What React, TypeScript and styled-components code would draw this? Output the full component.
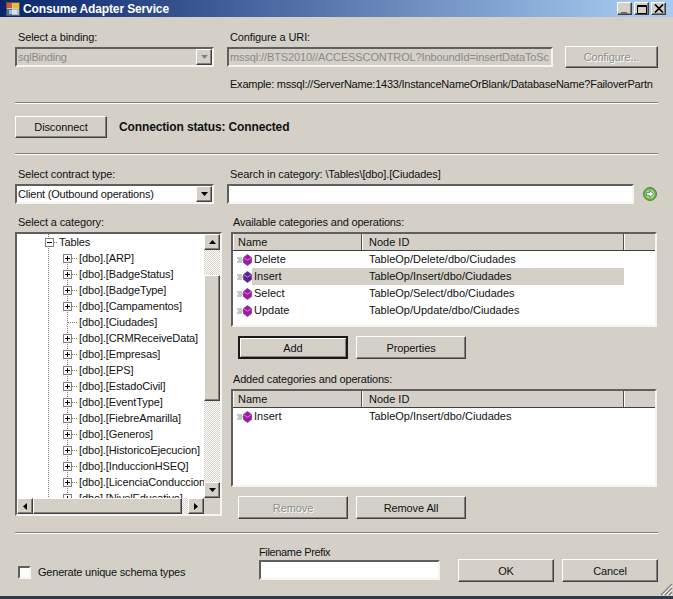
import React from "react";
import styled, { createGlobalStyle, css } from "styled-components";

const Global = createGlobalStyle`
  html, body { margin: 0; padding: 0; background: #d4d0c8; }
  * { box-sizing: border-box; }
`;

const dither = css`
  background-color: #d4d0c8;
  background-image: repeating-conic-gradient(#ffffff 0 25%, #d4d0c8 0 50%);
  background-size: 2px 2px;
`;
const raised = css`
  background: #d4d0c8;
  border-style: solid;
  border-width: 1px;
  border-color: #ffffff #404040 #404040 #ffffff;
  box-shadow: inset -1px -1px 0 #808080;
`;
const sunken = css`
  border-style: solid;
  border-width: 2px;
  border-color: #5f5f5f #f6f5f2 #f6f5f2 #5f5f5f;
`;

const Win = styled.div`
  position: relative;
  width: 673px;
  height: 599px;
  overflow: hidden;
  background: #d4d0c8;
  color: #111;
  font: 11px/14px "Liberation Sans", Arial, sans-serif;
  border-bottom: 3px solid #2c3a4e;
  display: flex;
  flex-direction: column;
`;
const TitleBar = styled.div`
  height: 17px;
  flex: none;
  background: linear-gradient(90deg, #0a246a 0%, #a6caf0 96%);
  display: flex;
  align-items: center;
  padding: 0 7px 0 6px;
  color: #fff;
  font-size: 12px;
  font-weight: bold;
  letter-spacing: -0.13px;
  gap: 3px;
`;
const TitleText = styled.span`
  flex: 1;
`;
const WinBtn = styled.div`
  ${raised}
  width: 15px;
  height: 13px;
  display: flex;
  align-items: center;
  justify-content: center;
`;
const WinBtnGroup = styled.div`
  display: flex;
  gap: 2px;
`;
const Content = styled.div`
  flex: 1;
  padding: 13px 15px 0;
  display: flex;
  flex-direction: column;
`;
const TwoCols = styled.div<{ $top?: number }>`
  display: grid;
  grid-template-columns: 212px 1fr;
  margin-top: ${(p) => p.$top ?? 0}px;
`;
const FieldLabel = styled.div`
  padding-left: 3px;
  height: 14px;
  margin-bottom: 3px;
  white-space: nowrap;
  letter-spacing: -0.12px;
`;
const ComboBox = styled.div<{ $disabled?: boolean }>`
  ${sunken}
  width: 199px;
  height: 20px;
  display: flex;
  align-items: center;
  background: ${(p) => (p.$disabled ? "#d4d0c8" : "#fff")};
  color: ${(p) => (p.$disabled ? "#8a8a8a" : "#111")};
  padding-left: 1px;
  letter-spacing: -0.2px;
`;
const ComboText = styled.span`
  flex: 1;
`;
const ComboArrow = styled.div`
  ${raised}
  width: 16px;
  height: 16px;
  display: flex;
  align-items: center;
  justify-content: center;
`;
const UriRow = styled.div`
  display: flex;
  align-items: center;
  margin-top: -1px;
  gap: 12px;
`;
const TextField = styled.div<{ $w: number; $disabled?: boolean }>`
  ${sunken}
  width: ${(p) => p.$w}px;
  height: 20px;
  background: ${(p) => (p.$disabled ? "#d4d0c8" : "#fff")};
  color: #8a8a8a;
  white-space: nowrap;
  overflow: hidden;
  padding: 1px 0 0 1px;
  letter-spacing: -0.11px;
`;
const Btn = styled.div<{ $w: number; $h?: number; $disabled?: boolean; $default?: boolean }>`
  ${raised}
  width: ${(p) => p.$w}px;
  height: ${(p) => p.$h ?? 22}px;
  flex: none;
  display: flex;
  align-items: center;
  justify-content: center;
  letter-spacing: -0.1px;
  color: ${(p) => (p.$disabled ? "#8d8d8d" : "#111")};
  ${(p) => p.$disabled && "text-shadow: 1px 1px 0 #fff;"}
  ${(p) =>
    p.$default &&
    "border: 2px solid #1a1a1a; box-shadow: inset 1px 1px 0 #fff, inset -1px -1px 0 #808080;"}
`;
const Example = styled.div`
  margin: 9px 0 0 215px;
  height: 14px;
  white-space: nowrap;
  overflow: hidden;
  letter-spacing: -0.23px;
`;
const Separator = styled.div<{ $top: number }>`
  height: 2px;
  flex: none;
  margin-top: ${(p) => p.$top}px;
  border-top: 1px solid #808080;
  border-bottom: 1px solid #fff;
`;
const ConnectRow = styled.div`
  display: flex;
  align-items: center;
  gap: 12px;
  margin-top: 12px;
`;
const Status = styled.div`
  font-size: 12px;
  font-weight: bold;
  letter-spacing: -0.13px;
`;
const SearchRow = styled.div`
  display: flex;
  align-items: center;
  gap: 9px;
`;
const Panels = styled.div`
  display: grid;
  grid-template-columns: 207px 1fr;
  column-gap: 5px;
  margin-top: 11px;
`;
const Tree = styled.div`
  ${sunken}
  height: 284px;
  background: #fff;
  display: grid;
  grid-template-columns: 1fr 16px;
  grid-template-rows: 1fr 16px;
`;
const TreeBody = styled.div`
  overflow: hidden;
  background-image:
    repeating-linear-gradient(180deg, #777 0 1px, transparent 1px 2px),
    repeating-linear-gradient(180deg, #777 0 1px, transparent 1px 2px);
  background-size: 1px 100%, 1px 100%;
  background-position: 31px 0, 50px 24px;
  background-repeat: no-repeat;
`;
const TreeRow = styled.div<{ $level: number }>`
  height: 16px;
  display: flex;
  align-items: center;
  padding-left: ${(p) => (p.$level === 0 ? 28 : 46)}px;
  white-space: nowrap;
  letter-spacing: -0.12px;
`;
const Expander = styled.svg`
  flex: none;
  background: #fff;
`;
const Dots = styled.span<{ $w: number; $ml?: number }>`
  flex: none;
  width: ${(p) => p.$w}px;
  margin-left: ${(p) => p.$ml ?? 0}px;
  height: 1px;
  background: repeating-linear-gradient(90deg, #777 0 1px, transparent 1px 2px);
`;
const TreeLabel = styled.span`
  margin-left: 2px;
`;
const VBar = styled.div`
  display: flex;
  flex-direction: column;
`;
const HBar = styled.div`
  display: flex;
`;
const SbBtn = styled.div`
  ${raised}
  width: 16px;
  height: 16px;
  flex: none;
  display: flex;
  align-items: center;
  justify-content: center;
`;
const Track = styled.div<{ $size: number; $grow?: boolean }>`
  ${dither}
  flex: ${(p) => (p.$grow ? "1" : `0 0 ${p.$size}px`)};
`;
const Thumb = styled.div<{ $size: number }>`
  ${raised}
  flex: 0 0 ${(p) => p.$size}px;
`;
const Corner = styled.div`
  background: #d4d0c8;
`;
const RightCol = styled.div`
  padding-left: 4px;
  display: flex;
  flex-direction: column;
`;
const ListLabel = styled.div<{ $top?: number }>`
  padding-left: 2px;
  height: 14px;
  margin-top: ${(p) => p.$top ?? 0}px;
  margin-bottom: 3px;
  letter-spacing: -0.17px;
`;
const ListBox = styled.div<{ $h: number }>`
  ${sunken}
  width: 426px;
  height: ${(p) => p.$h}px;
  background: #fff;
`;
const ListHead = styled.div`
  display: grid;
  grid-template-columns: 129px 262px 1fr;
  height: 17px;
  background: #d4d0c8;
  border-bottom: 1px solid #404040;
`;
const HeadCell = styled.div<{ $first?: boolean }>`
  padding-left: ${(p) => (p.$first ? 4 : 6)}px;
  line-height: 16px;
  border-right: 1px solid #505050;
  border-left: 1px solid #fff;
  &:last-child {
    border-right: 0;
  }
`;
const ListRow = styled.div`
  display: grid;
  grid-template-columns: 129px 262px 1fr;
  height: 17px;
  line-height: 17px;
`;
const NameCell = styled.div`
  display: flex;
  align-items: center;
  padding-left: 3px;
`;
const NameText = styled.span<{ $selected?: boolean }>`
  flex: 1;
  height: 17px;
  padding-left: 2px;
  background: ${(p) => (p.$selected ? "#d4d0c8" : "transparent")};
`;
const NodeCell = styled.div<{ $selected?: boolean }>`
  padding-left: 7px;
  background: ${(p) => (p.$selected ? "#d4d0c8" : "transparent")};
`;
const ButtonRow = styled.div`
  display: flex;
  gap: 8px;
  margin: 9px 0 0 7px;
`;
const Footer = styled.div`
  display: flex;
  align-items: flex-start;
  margin-top: 11px;
`;
const CheckWrap = styled.div`
  width: 244px;
  display: flex;
  align-items: center;
  gap: 7px;
  padding: 20px 0 0 3px;
`;
const CheckBox = styled.div`
  ${sunken}
  width: 13px;
  height: 13px;
  background: #fff;
  flex: none;
`;
const CheckLabel = styled.span`
  letter-spacing: -0.2px;
`;
const PrefixCol = styled.div`
  width: 181px;
`;
const PrefixLabel = styled.div`
  height: 14px;
  margin-bottom: 1px;
  letter-spacing: -0.35px;
`;
const FooterButtons = styled.div`
  display: flex;
  gap: 8px;
  margin: 14px 0 0 18px;
`;
const Grip = styled.svg`
  position: absolute;
  right: 0;
  bottom: 0;
`;

const ArrowDown = ({ color = "#000" }: { color?: string }) => (
  <svg width="7" height="4" viewBox="0 0 7 4"><path d="M0 0h7L3.5 4z" fill={color} /></svg>
);
const ArrowUp = () => (
  <svg width="7" height="4" viewBox="0 0 7 4"><path d="M0 4h7L3.5 0z" fill="#000" /></svg>
);
const ArrowLeft = () => (
  <svg width="4" height="7" viewBox="0 0 4 7"><path d="M4 0v7L0 3.5z" fill="#000" /></svg>
);
const ArrowRight = () => (
  <svg width="4" height="7" viewBox="0 0 4 7"><path d="M0 0v7l4-3.5z" fill="#000" /></svg>
);

const AppIcon = () => (
  <svg width="14" height="14" viewBox="0 0 14 14">
    <rect x="0.5" y="0.5" width="13" height="13" fill="#d9c98a" stroke="#5a5a40" />
    <rect x="1" y="1" width="5" height="5" fill="#d8552c" />
    <rect x="7" y="1" width="6" height="5" fill="#e8b83c" />
    <rect x="1" y="7" width="5" height="6" fill="#3f6fc4" />
    <rect x="7" y="7" width="6" height="6" fill="#9cc4e8" />
    <path d="M3 9h8M3 11h8" stroke="#fff" />
  </svg>
);

const GoIcon = () => (
  <svg width="14" height="14" viewBox="0 0 14 14">
    <circle cx="7" cy="7" r="6.5" fill="#6aad4c" stroke="#4d8a3a" />
    <circle cx="7" cy="7" r="4.6" fill="#a8d890" />
    <path d="M3.5 5.7h3.2V3.4L10.6 7l-3.9 3.6V8.3H3.5z" fill="#fff" stroke="#3c6a30" strokeWidth="0.7" />
  </svg>
);

const OpIcon = ({ dark }: { dark?: boolean }) => (
  <svg width="16" height="12" viewBox="0 0 16 12" style={{ flex: "none" }}>
    <path d="M1 4h5M2 6h5M1 8h5" stroke="#8f8f8f" />
    <path d="M11.5 0.5l4 3v5l-4 3-4-3v-5z" fill={dark ? "#5c1f96" : "#a815a8"} stroke="#4b2a6b" strokeWidth="0.6" />
    <path d="M7.7 3.6l3.8 2.6 3.8-2.6" fill="none" stroke="#e6b8e6" strokeWidth="0.7" />
  </svg>
);

const Exp = ({ open }: { open?: boolean }) => (
  <Expander width="9" height="9" viewBox="0 0 9 9">
    <rect x="0.5" y="0.5" width="8" height="8" fill="#fff" stroke="#808080" />
    <path d={open ? "M2 4.5h5" : "M2 4.5h5M4.5 2v5"} stroke="#000" />
  </Expander>
);

const treeItems: { name: string; leaf?: boolean }[] = [
  { name: "[dbo].[ARP]" },
  { name: "[dbo].[BadgeStatus]" },
  { name: "[dbo].[BadgeType]" },
  { name: "[dbo].[Campamentos]" },
  { name: "[dbo].[Ciudades]", leaf: true },
  { name: "[dbo].[CRMReceiveData]" },
  { name: "[dbo].[Empresas]" },
  { name: "[dbo].[EPS]" },
  { name: "[dbo].[EstadoCivil]" },
  { name: "[dbo].[EventType]" },
  { name: "[dbo].[FiebreAmarilla]" },
  { name: "[dbo].[Generos]" },
  { name: "[dbo].[HistoricoEjecucion]" },
  { name: "[dbo].[InduccionHSEQ]" },
  { name: "[dbo].[LicenciaConduccion]" },
  { name: "[dbo].[NivelEducativo]" },
];

const ops = ["Delete", "Insert", "Select", "Update"];

const ListHeader = () => (
  <ListHead>
    <HeadCell $first>Name</HeadCell>
    <HeadCell>Node ID</HeadCell>
    <HeadCell />
  </ListHead>
);

export default function App() {
  return (
    <Win>
      <Global />
      <TitleBar>
        <AppIcon />
        <TitleText>Consume Adapter Service</TitleText>
        <WinBtnGroup>
          <WinBtn>
            <svg width="10" height="10" viewBox="0 0 10 10"><path d="M1 8h6v1.6H1z" fill="#666" /></svg>
          </WinBtn>
          <WinBtn>
            <svg width="10" height="10" viewBox="0 0 10 10"><path d="M0.5 1.5h9v8h-9zM0.5 2.5h9" fill="none" stroke="#000" /></svg>
          </WinBtn>
          <WinBtn>
            <svg width="10" height="9" viewBox="0 0 10 9"><path d="M1 0.5l8 8M9 0.5l-8 8" stroke="#000" strokeWidth="1.7" /></svg>
          </WinBtn>
        </WinBtnGroup>
      </TitleBar>
      <Content>
        <TwoCols>
          <div>
            <FieldLabel>Select a binding:</FieldLabel>
            <ComboBox $disabled>
              <ComboText>sqlBinding</ComboText>
              <ComboArrow><ArrowDown color="#808080" /></ComboArrow>
            </ComboBox>
          </div>
          <div>
            <FieldLabel>Configure a URI:</FieldLabel>
            <UriRow>
              <TextField $w={326} $disabled>mssql://BTS2010//ACCESSCONTROL?InboundId=insertDataToSc</TextField>
              <Btn $w={93} $disabled>Configure...</Btn>
            </UriRow>
          </div>
        </TwoCols>
        <Example>Example: mssql://ServerName:1433/InstanceNameOrBlank/DatabaseName?FailoverPartn</Example>
        <Separator $top={11} />
        <ConnectRow>
          <Btn $w={92}>Disconnect</Btn>
          <Status>Connection status: Connected</Status>
        </ConnectRow>
        <Separator $top={15} />
        <TwoCols $top={12}>
          <div>
            <FieldLabel>Select contract type:</FieldLabel>
            <ComboBox>
              <ComboText>Client (Outbound operations)</ComboText>
              <ComboArrow><ArrowDown /></ComboArrow>
            </ComboBox>
          </div>
          <div>
            <FieldLabel>Search in category: \Tables\[dbo].[Ciudades]</FieldLabel>
            <SearchRow>
              <TextField $w={407} />
              <GoIcon />
            </SearchRow>
          </div>
        </TwoCols>
        <Panels>
          <div>
            <FieldLabel>Select a category:</FieldLabel>
            <Tree>
              <TreeBody>
                <TreeRow $level={0}>
                  <Exp open />
                  <Dots $w={3} />
                  <TreeLabel>Tables</TreeLabel>
                </TreeRow>
                {treeItems.map((t) => (
                  <TreeRow $level={1} key={t.name}>
                    {t.leaf ? <Dots $w={9} $ml={5} /> : <Exp />}
                    {!t.leaf && <Dots $w={5} />}
                    <TreeLabel>{t.name}</TreeLabel>
                  </TreeRow>
                ))}
              </TreeBody>
              <VBar>
                <SbBtn><ArrowUp /></SbBtn>
                <Track $size={25} />
                <Thumb $size={126} />
                <Track $size={0} $grow />
                <SbBtn><ArrowDown /></SbBtn>
              </VBar>
              <HBar>
                <SbBtn><ArrowLeft /></SbBtn>
                <Thumb $size={149} />
                <Track $size={0} $grow />
                <SbBtn><ArrowRight /></SbBtn>
              </HBar>
              <Corner />
            </Tree>
          </div>
          <RightCol>
            <ListLabel>Available categories and operations:</ListLabel>
            <ListBox $h={95}>
              <ListHeader />
              {ops.map((o) => (
                <ListRow key={o}>
                  <NameCell>
                    <OpIcon dark={o === "Insert"} />
                    <NameText $selected={o === "Insert"}>{o}</NameText>
                  </NameCell>
                  <NodeCell $selected={o === "Insert"}>TableOp/{o}/dbo/Ciudades</NodeCell>
                </ListRow>
              ))}
            </ListBox>
            <ButtonRow>
              <Btn $w={110} $h={23} $default>Add</Btn>
              <Btn $w={110} $h={23}>Properties</Btn>
            </ButtonRow>
            <ListLabel $top={13}>Added categories and operations:</ListLabel>
            <ListBox $h={98}>
              <ListHeader />
              <ListRow>
                <NameCell>
                  <OpIcon />
                  <NameText>Insert</NameText>
                </NameCell>
                <NodeCell>TableOp/Insert/dbo/Ciudades</NodeCell>
              </ListRow>
            </ListBox>
            <ButtonRow>
              <Btn $w={110} $h={23} $disabled>Remove</Btn>
              <Btn $w={110} $h={23}>Remove All</Btn>
            </ButtonRow>
          </RightCol>
        </Panels>
        <Separator $top={13} />
        <Footer>
          <CheckWrap>
            <CheckBox />
            <CheckLabel>Generate unique schema types</CheckLabel>
          </CheckWrap>
          <PrefixCol>
            <PrefixLabel>Filename Prefix</PrefixLabel>
            <TextField $w={181} />
          </PrefixCol>
          <FooterButtons>
            <Btn $w={96} $h={23}>OK</Btn>
            <Btn $w={96} $h={23}>Cancel</Btn>
          </FooterButtons>
        </Footer>
      </Content>
      <Grip width="14" height="14" viewBox="0 0 14 14">
        <path d="M13 2L2 13M13 6L6 13M13 10l-3 3" stroke="#808080" strokeWidth="1.3" />
        <path d="M13 4L4 13M13 8l-5 5M13 12l-1 1" stroke="#fff" strokeWidth="1" />
      </Grip>
    </Win>
  );
}
